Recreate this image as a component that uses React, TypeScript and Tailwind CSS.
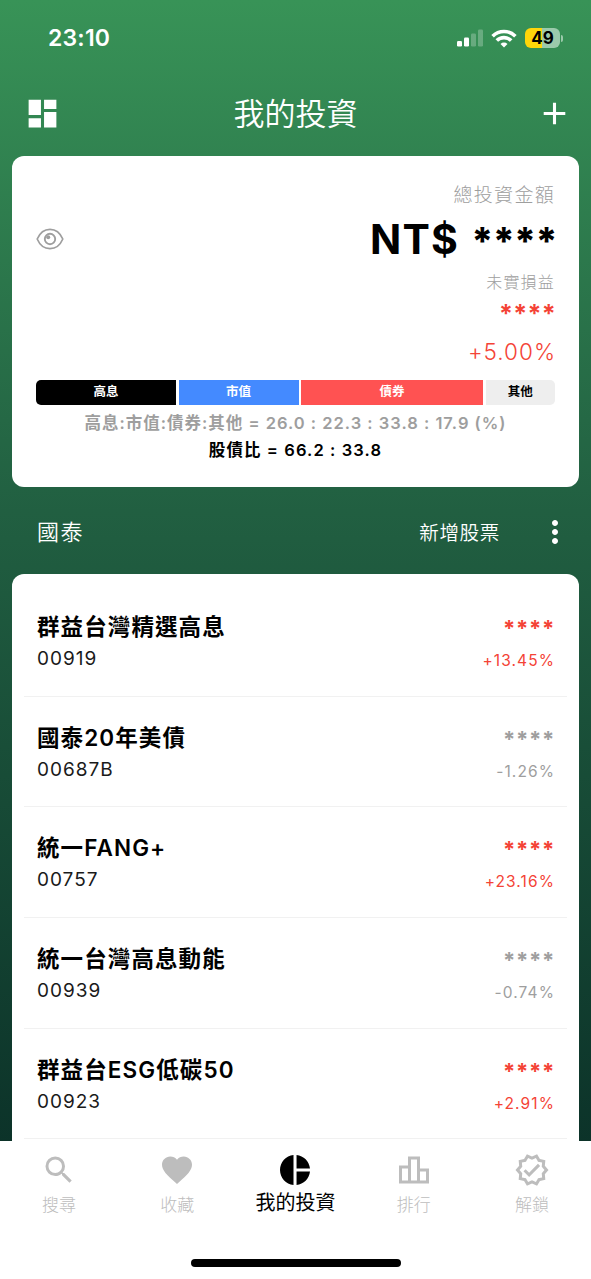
import {
  MdAdd,
  MdDashboard,
  MdFavorite,
  MdMoreVert,
  MdOutlineLeaderboard,
  MdOutlineVerified,
  MdPieChart,
  MdSearch,
} from "react-icons/md";

const allocation = [
  { label: "高息", className: "w-[140px] bg-black text-white rounded-l-[5px]" },
  { label: "市值", className: "w-[120px] bg-[#448aff] text-white" },
  { label: "債券", className: "w-[182px] bg-[#ff5252] text-white" },
  { label: "其他", className: "flex-1 bg-[#eeeeee] text-black rounded-r-[5px]" },
];

const stocks = [
  { name: "群益台灣精選高息", code: "00919", change: "+13.45%", up: true },
  { name: "國泰20年美債", code: "00687B", change: "-1.26%", up: false },
  { name: "統一FANG+", code: "00757", change: "+23.16%", up: true },
  { name: "統一台灣高息動能", code: "00939", change: "-0.74%", up: false },
  { name: "群益台ESG低碳50", code: "00923", change: "+2.91%", up: true },
];

const tabs = [
  { label: "搜尋", icon: MdSearch },
  { label: "收藏", icon: MdFavorite },
  { label: "我的投資", icon: MdPieChart, active: true },
  { label: "排行", icon: MdOutlineLeaderboard },
  { label: "解鎖", icon: MdOutlineVerified },
];

function EyeIcon() {
  return (
    <svg width="28" height="22" viewBox="0 0 28 22" fill="none" stroke="#9e9e9e">
      <path d="M1.2 11C3.6 5.4 8.3 1.3 14 1.3S24.4 5.4 26.8 11C24.4 16.6 19.7 20.7 14 20.7S3.600 16.6 1.2 11Z" strokeWidth="1.7" strokeLinejoin="round" />
      <circle cx="14" cy="11" r="5.2" strokeWidth="1.9" />
      <circle cx="12.2" cy="9.2" r="2" fill="#9e9e9e" stroke="none" />
    </svg>
  );
}

function StatusBar() {
  return (
    <div className="flex h-[76px] items-center justify-between pl-[48px] pr-[28px] text-white">
      <span className="text-[23px] font-semibold leading-none tracking-[0.2px]">23:10</span>
      <div className="flex items-center">
        <svg width="27" height="18" viewBox="0 0 27 18" fill="white">
          <rect x="0" y="12" width="5" height="5.5" rx="1.300" />
          <rect x="7" y="8.500" width="5" height="9" rx="1.300" />
          <rect x="14" y="4.500" width="5" height="13" rx="1.300" opacity="0.25" />
          <rect x="21" y="0.500" width="5" height="17" rx="1.300" opacity="0.25" />
        </svg>
        <svg className="ml-[7px]" width="26" height="19" viewBox="0 0 26 19" fill="none" stroke="white" strokeWidth="3.6">
          <path d="M1.6 7.200a16.200 16.200 0 0 1 22.800 0" />
          <path d="M5.800 11.600a10.200 10.200 0 0 1 14.400 0" />
          <path d="M13 18.500l-3.500-3.500a5 5 0 0 1 7 0z" fill="white" stroke="none" />
        </svg>
        <div className="ml-[8px] flex h-[20px] w-[35px] items-center justify-center rounded-[6px] bg-linear-to-r from-[#ffd60a] from-49% to-[#9bcaab] to-49% text-[17px] font-bold leading-none text-black">
          49
        </div>
        <div className="ml-[1px] h-[7px] w-[2px] rounded-r-full bg-[#9bcaab]" />
      </div>
    </div>
  );
}

function SummaryCard() {
  return (
    <section className="mx-3 h-[331px] rounded-[12px] bg-white px-6 pt-[24px]">
      <div className="flex h-[200px] justify-between">
        <div className="pt-[48px]">
          <EyeIcon />
        </div>
        <div className="flex flex-col items-end">
          <span className="h-[30px] text-[19px] font-light leading-[31px] tracking-[1.3px] text-[#9e9e9e]">總投資金額</span>
          <div className="flex h-[58px] items-center text-[41px] font-bold leading-[58px]">
            <span className="mr-[12px] tracking-[1.3px]">NT$</span>
            <span className="-mr-[2px] pt-[4px] text-[38px] font-extrabold tracking-[-0.7px]">****</span>
          </div>
          <span className="h-[28px] text-[16px] font-light leading-[28px] tracking-[1.2px] text-[#9e9e9e]">未實損益</span>
          <span className="-mr-[1px] h-[34px] text-[25px] font-bold leading-[36px] tracking-[0.3px] text-[#f44336]">****</span>
          <span className="-mr-[1px] h-[44px] text-[22.5px] font-light leading-[44px] tracking-[1px] text-[#f44336]">+5.00%</span>
        </div>
      </div>
      <div className="flex h-[25px] gap-[2.5px] text-[12.500px] font-bold">
        {allocation.map((item) => (
          <div key={item.label} className={`flex items-center justify-center ${item.className}`}>
            {item.label}
          </div>
        ))}
      </div>
      <p className="h-[32px] whitespace-nowrap text-center text-[16.5px] font-semibold leading-[36px] tracking-[1px] text-[#9e9e9e]">
        高息:市值:債券:其他 = 26.0 : 22.3 : 33.8 : 17.9 (%)
      </p>
      <p className="text-center text-[16.5px] font-semibold leading-[26px] tracking-[1.1px]">股債比 = 66.2 : 33.8</p>
    </section>
  );
}

function StockRow({ name, code, change, up }: (typeof stocks)[number]) {
  return (
    <li className="flex h-[110.7px] justify-between border-b border-[#f1f1f1] px-[13px] pt-[25px]">
      <div className="flex flex-col">
        <span className="h-[32px] text-[22.5px] font-semibold leading-[32px] tracking-[1.1px]">{name}</span>
        <span className="h-[30px] text-[19px] leading-[32px] tracking-[1px] text-[#1a1a1a]">{code}</span>
      </div>
      <div className={`-mr-[1px] flex flex-col items-end ${up ? "text-[#f44336]" : "text-[#9e9e9e]"}`}>
        <span className="h-[32px] text-[22px] font-bold leading-[35px] tracking-[0.7px]">****</span>
        <span className="h-[30px] text-[15.5px] leading-[35px] tracking-[1.1px]">{change}</span>
      </div>
    </li>
  );
}

function TabBar() {
  return (
    <nav className="flex h-[138px] flex-col justify-between bg-white pb-[12px]">
      <div className="grid grid-cols-5">
        {tabs.map(({ label, icon: Icon, active }) => (
          <div key={label} className={`flex flex-col items-center pt-[11px] ${active ? "text-black" : "text-[#bdbdbd]"}`}>
            <Icon size={36} />
            <span className={active ? "text-[20px] leading-[30px]" : "pt-[2px] text-[17px] font-light leading-[30px]"}>
              {label}
            </span>
          </div>
        ))}
      </div>
      <div className="mx-auto h-[8px] w-[210px] rounded-full bg-black" />
    </nav>
  );
}

export default function App() {
  return (
    <div className="flex h-[1279px] w-[591px] flex-col overflow-hidden bg-linear-to-b from-[#389357] via-[#215f41] via-40% to-[#082a24] font-['Inter','Noto_Sans_CJK_TC',sans-serif] text-black">
      <StatusBar />
      <header className="grid h-[80px] grid-cols-[1fr_auto_1fr] items-center pb-[5px] pl-[24px] pr-[18px] text-white">
        <MdDashboard size={37} />
        <h1 className="-ml-[6px] text-[31px] font-[350] leading-none">我的投資</h1>
        <MdAdd size={37} className="justify-self-end" />
      </header>
      <SummaryCard />
      <div className="flex h-[87px] items-center pl-[37px] pr-[18px] pt-[3px] text-white">
        <span className="flex-1 text-[22px] font-[350] tracking-[1.5px]">國泰</span>
        <button className="mr-[37px] pt-[3px] text-[19.5px] font-[350] tracking-[0.7px]">新增股票</button>
        <MdMoreVert size={36} />
      </div>
      <ul className="mx-3 min-h-0 flex-1 overflow-hidden rounded-t-[12px] bg-white px-3 pt-[12px]">
        {stocks.map((stock) => (
          <StockRow key={stock.code} {...stock} />
        ))}
      </ul>
      <TabBar />
    </div>
  );
}
